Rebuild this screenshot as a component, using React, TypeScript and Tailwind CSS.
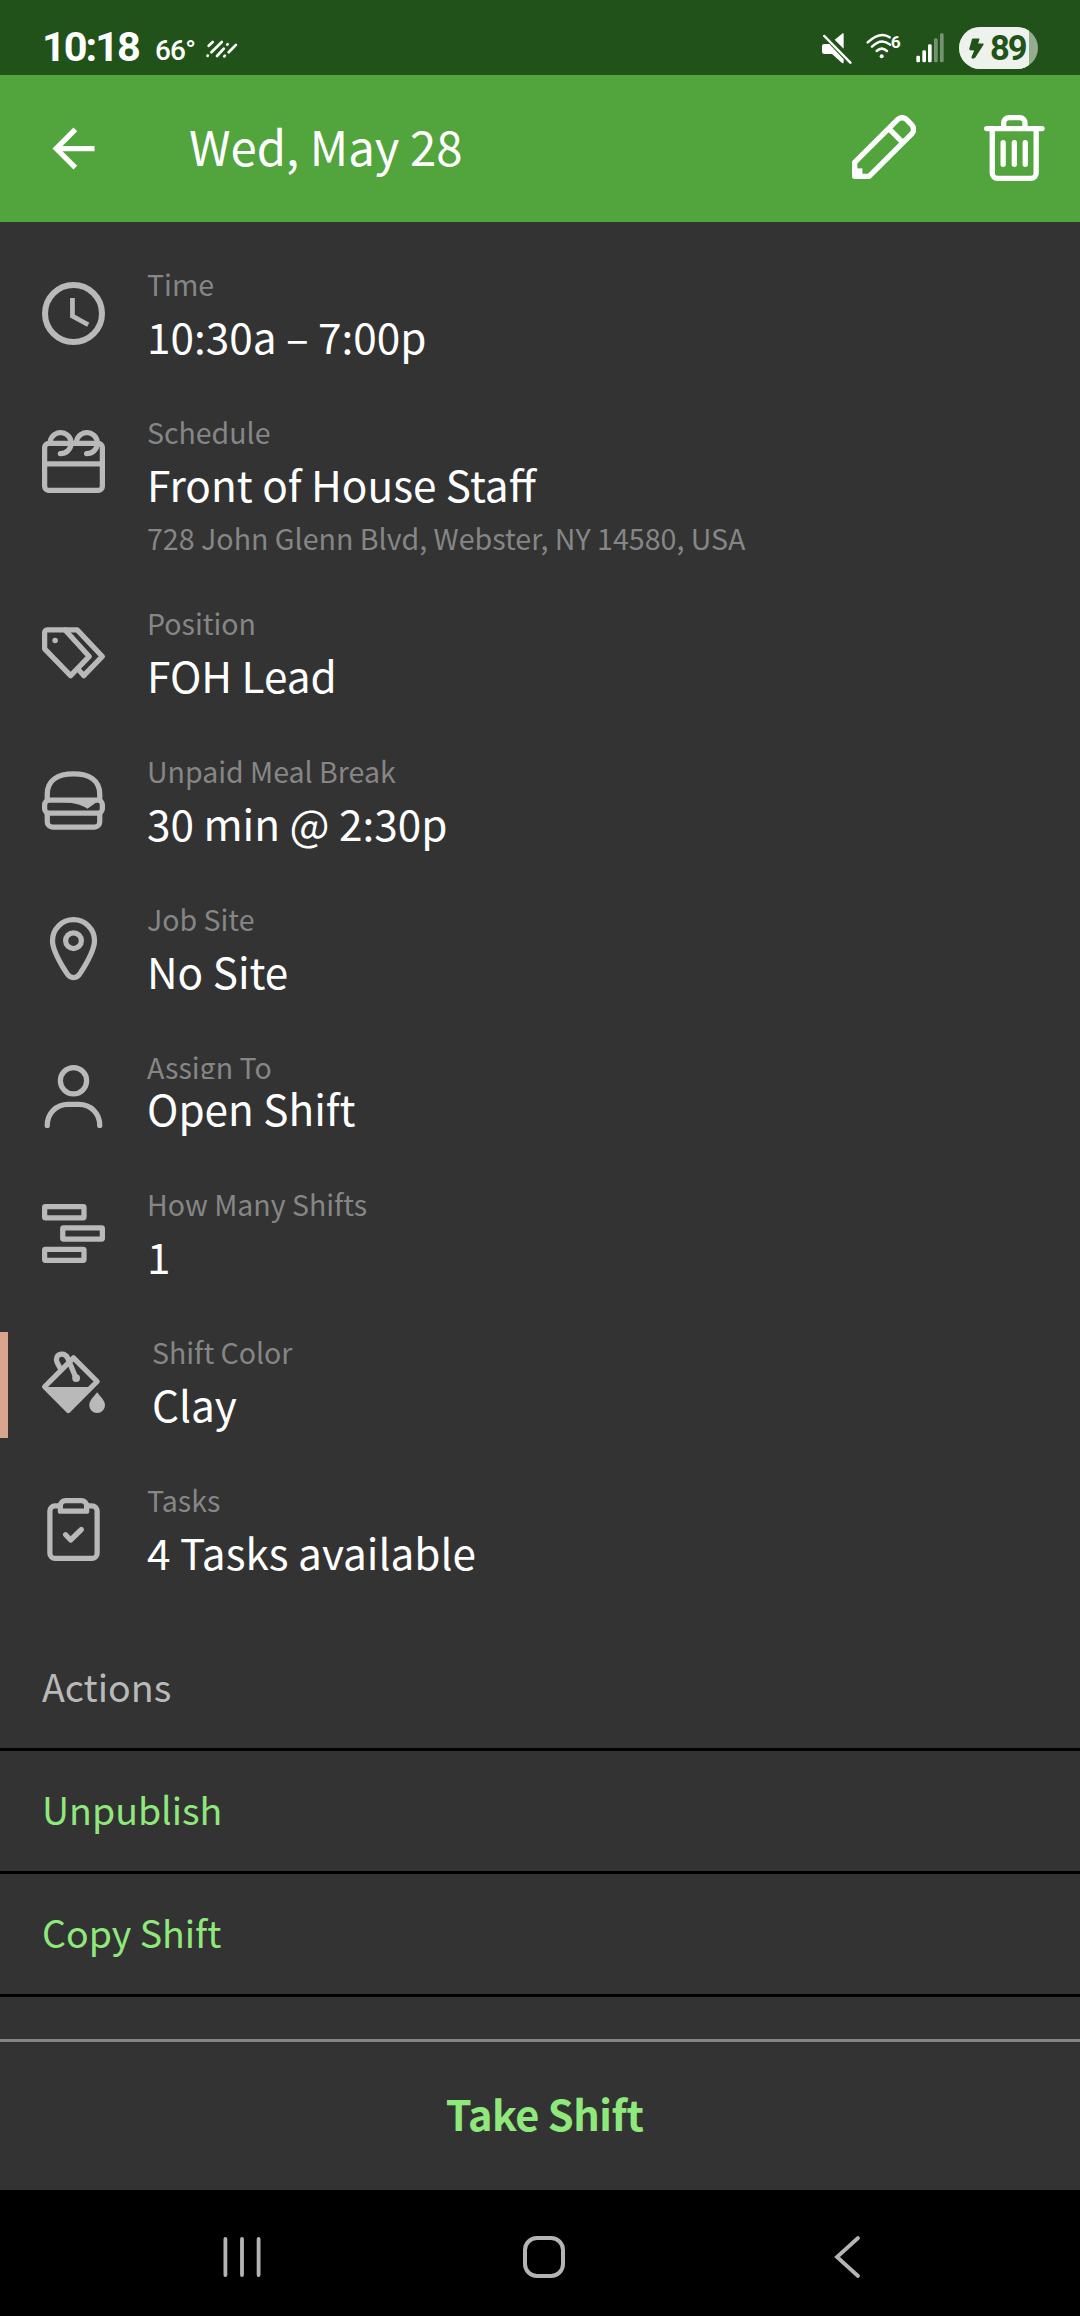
import type { ReactNode } from "react";

type DetailRowProps = {
  icon: ReactNode;
  label: string;
  value: string;
  note?: string;
  swatch?: boolean;
  clipLabel?: boolean;
};

type IconProps = {
  children: ReactNode;
};

function LineIcon({ children }: IconProps) {
  return (
    <svg
      viewBox="0 0 24 24"
      className="size-[63px] shrink-0 overflow-visible"
      fill="none"
      stroke="#b9b9b9"
      strokeWidth="2"
      strokeLinecap="round"
      strokeLinejoin="round"
    >
      {children}
    </svg>
  );
}

const ClockIcon = () => (
  <LineIcon>
    <circle cx="12" cy="12" r="10.85" strokeWidth="2.3" />
    <path d="M11.6 6.1V13l6 3.3" strokeWidth="1.8" strokeLinecap="butt" strokeLinejoin="miter" />
  </LineIcon>
);

const CalendarIcon = () => (
  <LineIcon>
    <rect x="1" y="5.1" width="22" height="17.9" rx="1.6" />
    <path d="M1 12.9h22" />
    <path d="M3.2 4.1A4 4 0 1 1 7 9M13.2 4.1A4 4 0 1 1 17 9" />
  </LineIcon>
);

const TagsIcon = () => (
  <LineIcon>
    <path d="M2 3.4h6.8L18 13.5l-7.1 7.3L1 10.6V4.4a1 1 0 0 1 1-1Z" />
    <path d="M8.8 3.4h4.6L23 13.5l-7.1 7.3-1.5-1.7" />
    <circle cx="5" cy="7.4" r="1.05" fill="#b9b9b9" stroke="none" />
  </LineIcon>
);

const BurgerIcon = () => (
  <LineIcon>
    <path d="M2 11.9V9.6C2 4.4 6 1.9 12 1.9s10 2.5 10 7.7v2.3" />
    <rect x="1" y="11.9" width="22" height="4.9" rx="1.7" />
    <path d="M2 17v3.1a2 2 0 0 0 2 2h16a2 2 0 0 0 2-2V17" />
    <path d="M7 12.6c4 .1 7.7.8 10.3 2.5l3.6-2.5Z" fill="#b9b9b9" stroke="none" />
  </LineIcon>
);

const PinIcon = () => (
  <LineIcon>
    <path d="M12 1a8 8 0 0 0-8 8c0 4.2 3.8 9.8 5.6 12.7a2.8 2.8 0 0 0 4.8 0C16.2 18.8 20 13.2 20 9a8 8 0 0 0-8-8Z" />
    <circle cx="12" cy="9" r="3" />
  </LineIcon>
);

const PersonIcon = () => (
  <LineIcon>
    <circle cx="12" cy="6" r="5" />
    <path d="M2 23c0-4.6 3.4-8 8-8h4c4.6 0 8 3.4 8 8" />
  </LineIcon>
);

const ShiftsIcon = () => (
  <LineIcon>
    <rect x="1" y="1.8" width="15" height="4.2" rx="0.3" />
    <rect x="7.9" y="9.9" width="15.1" height="4.2" rx="0.3" />
    <rect x="1" y="18" width="15" height="4.2" rx="0.3" />
  </LineIcon>
);

const PaintIcon = () => (
  <LineIcon>
    <path d="m12 3 9 9-11 11-9-9Z" />
    <path d="M1 14.1h18.5L10 23Z" fill="#b9b9b9" stroke="none" />
    <path d="M7.1 7.3C6.2 5.6 5.5 4.6 5.5 3.6c0-2.5 3.3-2.7 4.3-.5L13 10.8" />
    <circle cx="13" cy="10.7" r="1.5" fill="#b9b9b9" stroke="none" />
    <path d="M21 16.1c-1.2 1.6-3 3.2-3 4.9a3 3 0 0 0 6 0c0-1.7-1.8-3.3-3-4.9Z" fill="#b9b9b9" stroke="none" />
  </LineIcon>
);

const ClipboardIcon = () => (
  <LineIcon>
    <path d="M7 3H5a2 2 0 0 0-2 2v16a2 2 0 0 0 2 2h14a2 2 0 0 0 2-2V5a2 2 0 0 0-2-2h-2" />
    <path d="M7 5V3a2 2 0 0 1 2-2h6a2 2 0 0 1 2 2v2Z" />
    <path d="m9 14 1.9 2L15 12" />
  </LineIcon>
);

function StatusBar() {
  return (
    <div className="flex h-[75px] items-start bg-[#215219] font-['Roboto',sans-serif] text-white">
      <span className="mt-[23px] ml-[42px] w-[99px] text-[41.5px] leading-[48px] font-bold tracking-[-2px]">
        10:18
      </span>
      <span className="mt-[37px] ml-[14px] w-[49px] text-[28px] leading-[28px] font-medium tracking-[-0.8px]">
        66°
      </span>
      <svg
        viewBox="204 39 36 20"
        className="mt-[39px] h-[20px] w-[36px]"
        fill="none"
        stroke="white"
        strokeWidth="2.7"
        strokeLinecap="round"
      >
        <path d="m208.7 45.8 4-3.8M211.4 52.3 221.8 42M207.5 55.9l.3-.4M217 56l6.8-7.3M227.2 44.6l.4-.4M228.7 52.3l7.2-7.4M224.3 56.4l.6-.7" />
      </svg>

      <div className="mr-[42px] ml-auto flex items-start">
        <svg viewBox="36 38 90 93" className="mt-[33px] mr-[14px] h-[31px] w-[30px]">
          <path d="m74 58 24-19q3-1 3 3v43ZM42 71h16l43 46v8q0 6-5 3L66 101H43q-7 0-7-7V78q0-7 6-7Z" fill="white" />
          <path d="m43 47 78 80" stroke="white" strokeWidth="7.5" strokeLinecap="round" />
        </svg>
        <svg viewBox="168 38 105 78" className="mt-[33px] mr-[15px] h-[26px] w-[35px] overflow-visible">
          <path
            d="M173 66q38-35 66-15M186 79q28-28 54-6M200 92q15-14 31 0"
            fill="none"
            stroke="white"
            strokeWidth="7.5"
            strokeLinecap="round"
          />
          <circle cx="215" cy="108" r="6" fill="white" />
          <text x="242" y="82" fontSize="52" fontWeight="700" fill="white">
            6
          </text>
        </svg>
        <svg viewBox="318 41 84 89" className="mt-[33px] mr-[15px] h-[29.7px] w-[28px]" fill="white">
          <rect x="319" y="109" width="11" height="20" rx="4" />
          <rect x="337" y="93" width="11" height="36" rx="4" />
          <rect x="354" y="75" width="11" height="54" rx="4" />
          <rect x="372" y="57" width="11" height="72" rx="4" opacity="0.38" />
          <rect x="390" y="42" width="11" height="87" rx="4" opacity="0.38" />
        </svg>
        <div className="mt-[27px] flex h-[42px] w-[79px] overflow-hidden rounded-full bg-[#96ac91] text-[#215219]">
          <div className="flex w-[70px] items-center bg-[#edf2ed] pl-[10px]">
            <svg viewBox="477 51 46 64" className="mr-[6px] h-[21px] w-[15px] shrink-0" fill="#215219">
              <path d="M489 52h18q3 0 2 3l-4 13h14q5 0 2 4l-24 38q-4 5-9 4-5-1-3-6l8-19-12-1q-4 0-3-5l8-28q1-3 3-3Z" />
            </svg>
            <span className="text-[34.5px] leading-[42px] font-bold tracking-[-2px]">89</span>
          </div>
        </div>
      </div>
    </div>
  );
}

function Header() {
  return (
    <header className="flex h-[147px] items-center bg-[#52a43d] text-white">
      <svg viewBox="0 0 24 24" className="ml-[42px] size-[63px]" fill="white">
        <path d="M20 11H7.83l5.59-5.59L12 4l-8 8 8 8 1.41-1.41L7.83 13H20v-2Z" />
      </svg>
      <h1 className="mb-[6px] ml-[84px] text-[47.3px] leading-[60px] whitespace-nowrap">Wed, May 28</h1>
      <svg
        viewBox="0 0 24 24"
        className="mb-[3px] ml-auto size-[64px]"
        fill="none"
        stroke="white"
        strokeWidth="2"
        strokeLinejoin="round"
      >
        <path d="M1 23v-5.2l16-16q1.8-1.6 3.6 0l1.7 1.8q1.6 1.8 0 3.6L6.4 23Z" />
        <path d="m14.3 5.6 4.2 4.2" />
        <path d="M.8 20h3.1v3.5H.8Z" fill="white" stroke="none" />
      </svg>
      <svg
        viewBox="0 0 22.8 24.8"
        className="mr-[35px] mb-px ml-[68px] h-[66px] w-[60.7px]"
        fill="none"
        stroke="white"
        strokeWidth="2"
        strokeLinecap="round"
        strokeLinejoin="round"
      >
        <path d="M1 5.1h20.8M7.4 5V3a2 2 0 0 1 2-2h4a2 2 0 0 1 2 2v2" />
        <path d="M3.1 5.1v16.7a2 2 0 0 0 2 2h12.5a2 2 0 0 0 2-2V5.1" />
        <path d="M7.2 10.4v8.1M11.4 10.4v8.1M15.5 10.4v8.1" />
      </svg>
    </header>
  );
}

function DetailRow({ icon, label, value, note, swatch, clipLabel }: DetailRowProps) {
  return (
    <div className="flex items-start">
      <div className={swatch ? "h-[106px] w-[8px] bg-[#d9a58c]" : "w-0"} />
      <div className={swatch ? "mt-[18px] ml-[34px]" : "mt-[18px] ml-[42px]"}>{icon}</div>
      <div className={swatch ? "ml-[47px]" : "ml-[42px]"}>
        <div
          className={
            clipLabel
              ? "h-[32px] overflow-hidden text-[28.5px] leading-[40px] text-[#868686]"
              : "h-[38px] text-[28.5px] leading-[40px] text-[#868686]"
          }
        >
          {label}
        </div>
        <div
          className={
            clipLabel
              ? "mt-[-5px] h-[68px] text-[42.3px] leading-[67px] text-white"
              : "h-[68px] text-[42.3px] leading-[67px] text-white"
          }
        >
          {value}
        </div>
        {note && <div className="h-[43px] text-[28.6px] leading-[40px] text-[#868686]">{note}</div>}
      </div>
    </div>
  );
}

function NavBar() {
  return (
    <nav className="flex h-[126px] items-center bg-black pt-[8px]">
      <svg viewBox="0 0 40 42" className="ml-[222px] h-[42px] w-[40px]" stroke="#b4b4b4" strokeWidth="3.8" strokeLinecap="round">
        <path d="M3.4 3v36M20 3v36M36.6 3v36" />
      </svg>
      <svg viewBox="0 0 44 44" className="ml-[260px] size-[44px]" fill="none" stroke="#b4b4b4" strokeWidth="4">
        <rect x="3" y="3" width="38" height="38" rx="12" />
      </svg>
      <svg
        viewBox="0 0 28 44"
        className="ml-[267px] h-[44px] w-[28px]"
        fill="none"
        stroke="#b4b4b4"
        strokeWidth="3.8"
        strokeLinecap="round"
      >
        <path d="M25 3 4 22l21 19" />
      </svg>
    </nav>
  );
}

const rows: DetailRowProps[] = [
  { icon: <ClockIcon />, label: "Time", value: "10:30a – 7:00p" },
  {
    icon: <CalendarIcon />,
    label: "Schedule",
    value: "Front of House Staff",
    note: "728 John Glenn Blvd, Webster, NY 14580, USA",
  },
  { icon: <TagsIcon />, label: "Position", value: "FOH Lead" },
  { icon: <BurgerIcon />, label: "Unpaid Meal Break", value: "30 min @ 2:30p" },
  { icon: <PinIcon />, label: "Job Site", value: "No Site" },
  { icon: <PersonIcon />, label: "Assign To", value: "Open Shift", clipLabel: true },
  { icon: <ShiftsIcon />, label: "How Many Shifts", value: "1" },
  { icon: <PaintIcon />, label: "Shift Color", value: "Clay", swatch: true },
  { icon: <ClipboardIcon />, label: "Tasks", value: "4 Tasks available" },
];

const actions = ["Unpublish", "Copy Shift"];

export default function App() {
  return (
    <div className="flex h-[2316px] w-[1080px] flex-col overflow-hidden bg-[#333333] font-['Noto_Sans_CJK_SC','Noto_Sans',sans-serif]">
      <StatusBar />
      <Header />
      <main className="flex-1 overflow-hidden pt-[42px]">
        <div className="flex flex-col gap-[42px]">
          {rows.map((row) => (
            <DetailRow key={row.label} {...row} />
          ))}
        </div>
        <h2 className="h-[162px] pt-[77px] pl-[42px] text-[37.6px] leading-[46px] text-[#b9b9b9]">Actions</h2>
        {actions.map((action) => (
          <button
            key={action}
            className="block h-[123px] w-full border-t-[3px] border-black pb-[5px] pl-[42px] text-left text-[37.5px] leading-[115px] text-[#8fe87b]"
          >
            {action}
          </button>
        ))}
        <div className="border-t-[3px] border-black" />
      </main>
      <footer className="h-[151px] border-t-[3px] border-[#868484]">
        <button className="block w-full pl-[9px] text-center text-[41.5px] leading-[143px] font-bold tracking-[-0.5px] text-[#8fe87b]">
          Take Shift
        </button>
      </footer>
      <NavBar />
    </div>
  );
}
